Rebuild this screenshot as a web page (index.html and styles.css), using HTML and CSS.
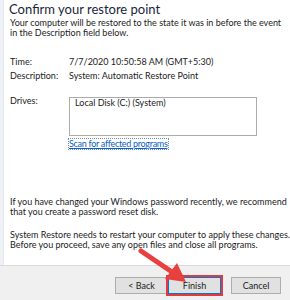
FILE: index.html
```html
<html>
<head>
    <title>System Restore</title>
    <link rel="stylesheet" href="styles.css">
</head>
<body>
    <div id="wizard" class="wizard">
        <div class="pane">
            <div class="sideStrip"></div>
            <div class="content">
                <div class="title">Confirm your restore point</div>
                <p class="intro">Your computer will be restored to the state it was in before the event<br>in the Description field below.</p>
                <div class="details">
                    <div class="row"><span class="label">Time:</span><span>7/7/2020 10:50:58 AM (GMT+5:30)</span></div>
                    <div class="row"><span class="label">Description:</span><span>System: Automatic Restore Point</span></div>
                </div>
                <div class="drives">
                    <span class="label drivesLabel">Drives:</span>
                    <div class="driveCol">
                        <div class="listBox">Local Disk (C:) (System)</div>
                        <span class="scanLink"><u>Scan for affected programs</u></span>
                    </div>
                </div>
                <p class="note">If you have changed your Windows password recently, we recommend<br>that you create a password reset disk.</p>
                <p class="note second">System Restore needs to restart your computer to apply these changes.<br>Before you proceed, save any open files and close all programs.</p>
            </div>
        </div>
        <div class="footer">
            <div class="btn">&lt; Back</div>
            <div class="btn focused">Finish</div>
            <div class="btn cancel">Cancel</div>
        </div>
        <svg class="arrow" width="290" height="300" viewBox="0 0 290 300">
            <line x1="141" y1="251" x2="172" y2="272" stroke="#e8403f" stroke-width="5" stroke-linecap="round"/>
            <polygon points="186,282 165,279 177,263" fill="#e8403f"/>
        </svg>
    </div>
</body>
</html>
```

FILE: styles.css
```css
body {
    margin: 0;
    background-color: #ffffff;
    font-family: 'Lato', 'Open Sans', sans-serif;
    font-size: 9px;
    color: #1b1b1b;
    white-space: nowrap;
}

.wizard {
    position: relative;
    width: 290px;
    height: 300px;
    overflow: hidden;
    display: flex;
    flex-direction: column;
}

.pane {
    display: flex;
    height: 265px;
    flex-shrink: 0;
    background-color: white;
}

.sideStrip {
    width: 5px;
    background-color: #eef1f6;
    border-right: 1px solid #e3e7ee;
}

.content {
    flex-grow: 1;
    padding-left: 6px;
}

.title {
    font-size: 13px;
    line-height: 18px;
    color: #1a1f3a;
    margin-left: -1px;
}

p {
    margin: 0;
    line-height: 10px;
}

.details {
    margin-top: 17px;
}

.row {
    display: flex;
    line-height: 14px;
}

.label {
    width: 59px;
    flex-shrink: 0;
}

.drives {
    display: flex;
    margin-top: 14px;
}

.drivesLabel {
    line-height: 10px;
    margin-top: -1px;
}

.driveCol {
    display: flex;
    flex-direction: column;
    align-items: flex-start;
}

.listBox {
    width: 176px;
    height: 37px;
    border: 1px solid #acacac;
    padding: 0 5px;
    line-height: 10px;
}

.scanLink {
    margin-top: 3px;
    line-height: 10px;
    color: #0b5fc4;
    letter-spacing: -0.3px;
    outline: 1px dotted #6a8fc0;
}

.note {
    margin-top: 48px;
}

.note.second {
    margin-top: 13px;
}

.footer {
    flex-grow: 1;
    display: flex;
    justify-content: flex-end;
    align-items: flex-start;
    padding: 11px 9px 0 0;
    background-color: #f0f0f0;
    border-top: 1px solid #dadada;
}

.btn {
    width: 51px;
    height: 15px;
    line-height: 15px;
    text-align: center;
    background-color: #e1e1e1;
    border: 1px solid #adadad;
}

.focused {
    border-color: #0078d7;
    outline: 2px solid #e23b3b;
    outline-offset: 0;
}

.cancel {
    margin-left: 10px;
    width: 48px;
}

.arrow {
    position: absolute;
    left: 0;
    top: 0;
}
```
